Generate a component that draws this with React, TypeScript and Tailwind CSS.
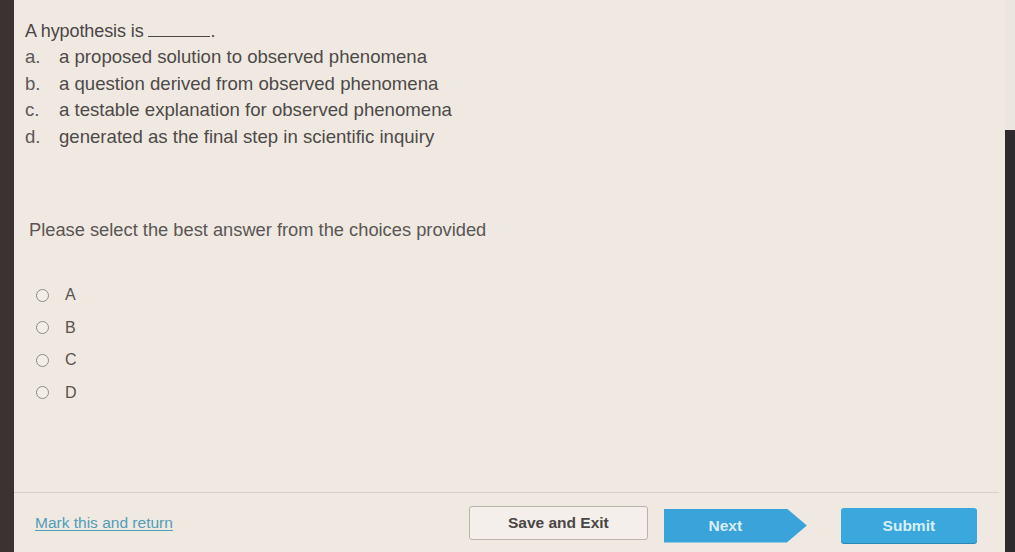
const options = [
  { letter: "a.", text: "a proposed solution to observed phenomena" },
  { letter: "b.", text: "a question derived from observed phenomena" },
  { letter: "c.", text: "a testable explanation for observed phenomena" },
  { letter: "d.", text: "generated as the final step in scientific inquiry" },
];

const choices = ["A", "B", "C", "D"];

export default function App() {
  return (
    <div className="flex h-[552px] w-[1015px] overflow-hidden bg-[#ece5dc] font-['Liberation_Sans',Arial,sans-serif]">
      {/* Left bezel */}
      <div className="w-[14px] shrink-0 bg-[#3a3331]" />

      <div className="flex min-w-0 flex-1 flex-col bg-[#efe9e1]">
        {/* Question */}
        <div className="flex-1 pl-[11px] pt-[18px]">
          <p className="text-[18px] leading-[26px] tracking-[-0.1px] text-[#4a4646]">
            A hypothesis is <span className="inline-block w-[62px] border-b border-[#4a4646] align-baseline" />.
          </p>
          <ul className="text-[18.6px] leading-[26.5px] text-[#4d4a49]">
            {options.map((o) => (
              <li key={o.letter} className="flex">
                <span className="w-[34px] text-[#5c5857]">{o.letter}</span>
                <span>{o.text}</span>
              </li>
            ))}
          </ul>

          <p className="mt-[67px] pl-[4px] text-[18.3px] leading-[26px] text-[#5a5655]">
            Please select the best answer from the choices provided
          </p>

          <div className="mt-[43px] flex flex-col gap-[14px] pl-[11px]">
            {choices.map((c) => (
              <label key={c} className="flex h-[18.5px] items-center gap-[16px]">
                <span className="h-[13px] w-[13px] rounded-full border-[1.5px] border-[#8f8b89] bg-[#f3eee8]" />
                <span className="text-[16px] text-[#57534f]">{c}</span>
              </label>
            ))}
          </div>
        </div>

        {/* Footer */}
        <div className="mr-[6px] flex h-[60px] items-center border-t border-[#d6d0c8] pl-[21px]">
          <a href="#" className="text-[15.5px] text-[#4f9db8] underline underline-offset-2">
            Mark this and return
          </a>
          <button className="ml-[296px] h-[34px] w-[179px] rounded-[3px] border border-[#b9b3ad] bg-[#f4efea] text-[15.5px] font-bold text-[#4a4645]">
            Save and Exit
          </button>
          <button className="ml-[16px] mt-[6px] h-[34px] w-[143px] bg-[#3aa3da] pr-[20px] text-[15.5px] font-bold text-[#d9eef8] [clip-path:polygon(0_0,86%_0,100%_50%,86%_100%,0_100%)]">
            Next
          </button>
          <button className="ml-[34px] mt-[6px] h-[35px] w-[136px] rounded-[3px] bg-[#3aa8dc] text-[15.5px] font-bold text-[#d9eef8] shadow-[0_1px_0_#2b87b8]">
            Submit
          </button>
        </div>
      </div>

      {/* Right bezel */}
      <div className="flex w-[10px] shrink-0 flex-col">
        <div className="h-[130px] bg-[#ece6e0]" />
        <div className="flex-1 bg-[#2e2b2e]" />
      </div>
    </div>
  );
}
